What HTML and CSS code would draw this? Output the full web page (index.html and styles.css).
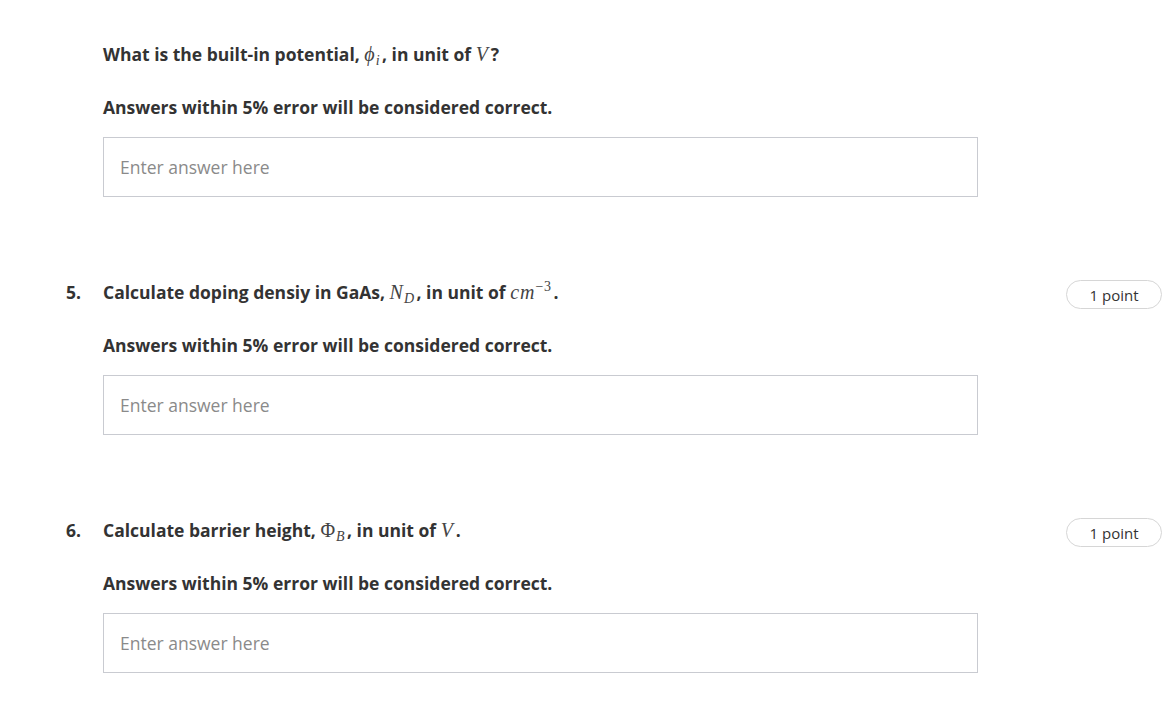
FILE: index.html
```html
<!DOCTYPE html>
<html>
<head>
<meta charset="utf-8">
<link rel="stylesheet" href="styles.css">
</head>
<body>
<div class="page">
  <div class="question">
    <div class="num"></div>
    <div class="content">
      <p class="qtext">What is the built-in potential, <span class="m">ϕ<sub>i</sub></span>, in unit of <span class="m">V</span>?</p>
      <p class="note">Answers within 5% error will be considered correct.</p>
      <div class="input">Enter answer here</div>
    </div>
    <div class="side"></div>
  </div>
  <div class="question">
    <div class="num">5.</div>
    <div class="content">
      <p class="qtext">Calculate doping densiy in GaAs, <span class="m">N<sub>D</sub></span>, in unit of <span class="m">cm<sup>−3</sup></span>.</p>
      <p class="note">Answers within 5% error will be considered correct.</p>
      <div class="input">Enter answer here</div>
    </div>
    <div class="side"><span class="pill">1 point</span></div>
  </div>
  <div class="question">
    <div class="num">6.</div>
    <div class="content">
      <p class="qtext">Calculate barrier height, <span class="m up">Φ<sub>B</sub></span>, in unit of <span class="m">V</span>.</p>
      <p class="note">Answers within 5% error will be considered correct.</p>
      <div class="input">Enter answer here</div>
    </div>
    <div class="side"><span class="pill">1 point</span></div>
  </div>
</div>
</body>
</html>
```
FILE: styles.css
```css
html, body {
  margin: 0;
  padding: 0;
  background: #fff;
}
body {
  font-family: "Open Sans", "Liberation Sans", sans-serif;
  color: #333;
}
.page {
  padding: 42px 0 0 66px;
  display: flex;
  flex-direction: column;
  gap: 83.5px;
}
.question {
  display: flex;
  align-items: flex-start;
}
.num {
  width: 37px;
  flex: none;
  font-weight: 700;
  font-size: 17.5px;
  line-height: 24px;
}
.content {
  width: 875px;
  flex: none;
}
.qtext, .note {
  margin: 0;
  font-size: 17.5px;
  font-weight: 700;
  line-height: 24px;
  height: 24px;
}
.note {
  margin-top: 29px;
}
.m {
  font-family: "Liberation Serif", "DejaVu Serif", serif;
  font-style: italic;
  font-weight: 400;
  font-size: 20px;
  letter-spacing: 1px;
  color: #444;
  padding-right: 2px;
}
.m.up {
  font-style: normal;
}
.m sub, .m sup {
  font-size: 14px;
  font-style: italic;
  line-height: 0;
  letter-spacing: 0.5px;
}
.m sub {
  vertical-align: -4px;
}
.m sup {
  font-style: normal;
  vertical-align: 8px;
}
.input {
  margin-top: 17.5px;
  height: 58px;
  border: 1px solid #c9cbd1;
  box-sizing: content-box;
  padding: 0 16px;
  display: flex;
  align-items: center;
  font-size: 17.5px;
  color: #8a8a8a;
  font-weight: 400;
}
.side {
  flex: 1;
  display: flex;
  justify-content: flex-end;
  padding-right: 4px;
}
.pill {
  display: inline-flex;
  align-items: center;
  justify-content: center;
  width: 94px;
  height: 27px;
  border: 1px solid #d6d6d6;
  border-radius: 15px;
  font-size: 15px;
  color: #333;
}
```
